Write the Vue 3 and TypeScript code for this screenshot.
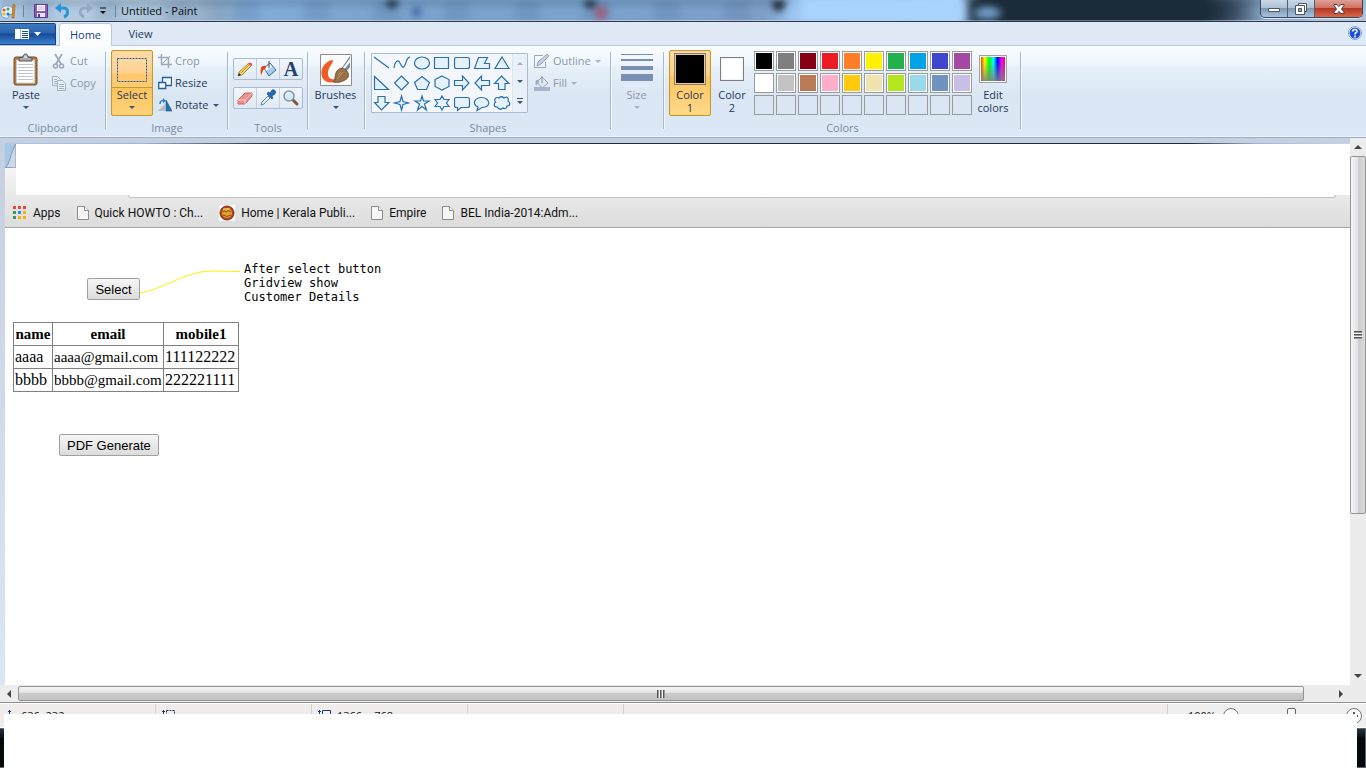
<script setup lang="ts">
import { ref } from 'vue'

interface Shape {
  name: string
  d: string
}

interface Bookmark {
  title: string
  icon: 'apps' | 'file' | 'emblem'
}

interface Customer {
  name: string
  email: string
  mobile: string
}

const shapes: Shape[] = [
  { name: 'Line', d: 'M2 4 17 15' },
  { name: 'Curve', d: 'M2 15C3 8 6 6 8 10S11 16 13 12 14 5 18 4' },
  { name: 'Oval', d: 'M2.5 10a7.5 6 0 1 0 15 0a7.500 6 0 1 0-15 0Z' },
  { name: 'Rectangle', d: 'M2.500 4.500h14v11h-14Z' },
  { name: 'Rounded rectangle', d: 'M4.500 4.500h11q2 0 2 2v7q0 2-2 2h-11q-2 0-2-2v-7q0-2 2-2Z' },
  { name: 'Polygon', d: 'M6.500 4.500h9l-3 6h5v5h-15Z' },
  { name: 'Triangle', d: 'M10 4 17 15.500H3Z' },
  { name: 'Right triangle', d: 'M2.500 3.500v13h14Z' },
  { name: 'Diamond', d: 'M9.500 3 16.500 10 9.500 17 2.500 10Z' },
  { name: 'Pentagon', d: 'M10 3.500 17.500 9.500 14.500 16.500h-9L2.500 9.500Z' },
  { name: 'Hexagon', d: 'M10 3 17 6.500v7L10 17 3 13.500v-7Z' },
  { name: 'Right arrow', d: 'M2.500 7.500h8v-4.500L17 10 10.500 17v-4.500h-8Z' },
  { name: 'Left arrow', d: 'M17.500 7.500h-8v-4.500L3 10 9.500 17v-4.500h8Z' },
  { name: 'Up arrow', d: 'M9.500 3 17 10.500h-4v6H6.500v-6h-4Z' },
  { name: 'Down arrow', d: 'M6 3.500h7v6h4L9.500 17 2.500 9.500H6Z' },
  { name: 'Four-point star', d: 'M9.500 3 11 8.500 16.500 10 11 11.500 9.500 17 8 11.500 2.500 10 8 8.500Z' },
  { name: 'Five-point star', d: 'M10 3 11.500 8H17l-4.500 3 2 6-4.500-3.500L5.500 17l2-6L3 8h5.500Z' },
  { name: 'Six-point star', d: 'M10 3 12 6.500h5L14.500 10 17 13.500h-5L10 17 8 13.500H3L5.500 10 3 6.500h5Z' },
  { name: 'Rounded callout', d: 'M4.500 4.500h11q2 0 2 2v6q0 2-2 2H9L5.500 17.500v-3h-1q-2 0-2-2v-6q0-2 2-2Z' },
  { name: 'Oval callout', d: 'M6 14C-1 11 3 4.500 10 4.500S21 14 10 14.500L5 17.500Z' },
  { name: 'Cloud callout', d: 'M5 14C1 14 2 10 3.500 9.500 1.500 6 4 3.500 7 5c2-2 4-1 5 0 3-2 5 0 4 3 3 2 2 5-1 5 0 3-3 3-4 2-2 2-4 1-5 0Z' },
]

const palette: string[] = [
  '#000000', '#7f7f7f', '#880015', '#ed1c24', '#ff7f27', '#fff200', '#22b14c', '#00a2e8', '#3f48cc', '#a349a4',
  '#ffffff', '#c3c3c3', '#b97a57', '#ffaec9', '#ffc90e', '#efe4b0', '#b5e61d', '#99d9ea', '#7092be', '#c8bfe7',
  '', '', '', '', '', '', '', '', '', '',
]

const bookmarks: Bookmark[] = [
  { title: 'Apps', icon: 'apps' },
  { title: 'Quick HOWTO : Ch...', icon: 'file' },
  { title: 'Home | Kerala Publi...', icon: 'emblem' },
  { title: 'Empire', icon: 'file' },
  { title: 'BEL India-2014:Adm...', icon: 'file' },
]

const appDots: string[] = ['#e8453c', '#e8453c', '#e8453c', '#2f9e58', '#2b8cf0', '#f5b400', '#2f9e58', '#f5b400', '#f5b400']

const customers: Customer[] = [
  { name: 'aaaa', email: 'aaaa@gmail.com', mobile: '111122222' },
  { name: 'bbbb', email: 'bbbb@gmail.com', mobile: '222221111' },
]

const color1 = ref('#000000')
const zoom = ref(50)

function pick(color: string) {
  if (color) color1.value = color
}
</script>

<template>
  <div class="window">
    <header class="titlebar">
      <div class="glass"></div>
      <svg class="app-icon" width="16" height="18" viewBox="0 0 16 18">
        <path d="M1 11C0 6 4 3 8 4c4 0 6 3 5 7-1 2-3 1-4 2 0 3-2 4-4 3-2 0-4-2-4-5Z" fill="#d9eef7" stroke="#6b9fbd" />
        <circle cx="4" cy="8" r="1.500" fill="#e8532c" /><circle cx="8" cy="7" r="1.500" fill="#3fa648" />
        <circle cx="4" cy="12" r="1.500" fill="#f1b51c" /><circle cx="8" cy="12" r="1.500" fill="#2f6fd0" />
        <path d="M13 2l2 1-1 13h-2Z" fill="#e58a2b" stroke="#a85a16" stroke-width=".6" />
      </svg>
      <span class="tick"></span>
      <div class="quick">
        <button type="button" aria-label="Save">
          <svg width="16" height="16" viewBox="0 0 16 16">
            <path d="M1.500 1.500h13v13h-13Z" fill="#8c5bb5" stroke="#5c3a8c" />
            <path d="M4 2h8v6H4Z" fill="#fff" /><path d="M5 4h6M5 6h6" stroke="#b9a6d3" />
            <path d="M4 10h8v4H4Z" fill="#e8e3f0" /><path d="M5 11h2v3H5Z" fill="#5c3a8c" />
          </svg>
        </button>
        <button type="button" aria-label="Undo">
          <svg width="16" height="16" viewBox="0 0 16 16">
            <path d="M3 5h5c6 0 6 7 1 9" fill="none" stroke="#2c93d8" stroke-width="3" />
            <path d="M6 0v10L0 5Z" fill="#2c93d8" />
          </svg>
        </button>
        <button type="button" aria-label="Redo">
          <svg width="16" height="16" viewBox="0 0 16 16">
            <path d="M13 5H8c-6 0-6 7-1 9" fill="none" stroke="#93aac2" stroke-width="3" />
            <path d="M10 0v10l6-5Z" fill="#93aac2" />
          </svg>
        </button>
        <button type="button" class="more" aria-label="Customize toolbar">
          <svg width="8" height="8" viewBox="0 0 8 8"><path d="M1 1h6" stroke="#111" /><path d="M1 4h6L4 7Z" fill="#111" /></svg>
        </button>
      </div>
      <span class="tick"></span>
      <h1>Untitled - Paint</h1>
      <div class="controls">
        <button type="button" aria-label="Minimize">
          <svg width="14" height="12" viewBox="0 0 14 12"><path d="M1.500 5.500h11v3h-11Z" fill="#fff" stroke="#4a5566" /></svg>
        </button>
        <button type="button" aria-label="Restore">
          <svg width="14" height="14" viewBox="0 0 14 14">
            <path d="M4.500 1.500h8v8h-8Z" fill="#fff" stroke="#4a5566" />
            <path d="M1.500 3.500h9v9h-9Z" fill="#fff" stroke="#4a5566" /><path d="M4.500 6.500h3v3h-3Z" fill="#8aa" stroke="#4a5566" />
          </svg>
        </button>
        <button type="button" class="close" aria-label="Close">
          <svg width="14" height="12" viewBox="0 0 14 12">
            <path d="M2 1.500h3l2 2 2-2h3v1L9.500 6l2.500 3v1.500H9L7 8.500l-2 2H2V9l2.500-3L2 2.500Z" fill="#fff" stroke="#4b3b45" />
          </svg>
        </button>
      </div>
    </header>

    <nav class="tabs">
      <button type="button" class="menu" aria-label="Paint menu">
        <svg width="28" height="12" viewBox="0 0 28 12">
          <path d="M1 1h14v10H1Z" fill="#fff" /><path d="M6.500 1v10" stroke="#a8bddb" />
          <path d="M8 3.500h6M8 5.500h6M8 7.500h6M8 9.500h6" stroke="#1a4b9c" /><path d="M20 4h7l-3.500 4Z" fill="#fff" />
        </svg>
      </button>
      <button type="button" class="tab active">Home</button>
      <button type="button" class="tab">View</button>
      <button type="button" class="help" aria-label="Help">
        <svg width="14" height="14" viewBox="0 0 14 14">
          <circle cx="7" cy="7" r="6.500" fill="#fff" stroke="#7ba3dc" /><circle cx="7" cy="7" r="5.500" fill="#1b50d8" />
          <path d="M4.500 5.500C5 2.500 9.500 3 9 5.500 8.500 7 7 6.500 7 8.500M7 9.500v2" fill="none" stroke="#fff" stroke-width="1.600" />
        </svg>
      </button>
    </nav>

    <section class="ribbon" aria-label="Ribbon">
      <div class="group clipboard">
        <div class="body">
          <button type="button" class="big">
            <svg class="pic" width="28" height="34" viewBox="0 0 28 34">
              <rect x="2" y="4" width="23" height="28" rx="2" fill="#b27a41" stroke="#7e5023" />
              <path d="M4.500 7h18v23h-18Z" fill="#fff" stroke="#c8ccd0" />
              <path d="M6 11.500h15M6 14.500h15M6 17.500h15M6 20.500h15M6 23.500h15M6 26.500h15" stroke="#b9c6d2" />
              <path d="M7 8V5l4-1c0-4 5-4 5 0l4 1v3Z" fill="#a9abae" stroke="#515457" /><path d="M12 4h3" stroke="#fff" />
            </svg>
            <span>Paste</span><i class="arrow"></i>
          </button>
          <div class="stack">
            <button type="button" class="small" disabled>
              <svg width="16" height="16" viewBox="0 0 16 16" fill="none" stroke="#9ba9bf" stroke-width="1.800">
                <path d="M4 1l6 10M11 1 5 11" /><circle cx="4.500" cy="13" r="2" stroke-width="1.500" /><circle cx="10.500" cy="13" r="2" stroke-width="1.500" />
              </svg>
              <span>Cut</span>
            </button>
            <button type="button" class="small" disabled>
              <svg width="16" height="16" viewBox="0 0 16 16" fill="#eaf0f8" stroke="#9fb0c8">
                <path d="M1.500 1.500h5l3 3v6h-8Z" /><path d="M3 4.500h3M3 6.500h3M3 8.500h3" />
                <path d="M6.500 5.500h5l3 3v7h-8Z" /><path d="M8 9.500h5M8 11.500h5M8 13.500h5" />
              </svg>
              <span>Copy</span>
            </button>
          </div>
        </div>
        <div class="label">Clipboard</div>
      </div>
      <div class="sep"></div>

      <div class="group image">
        <div class="body">
          <button type="button" class="big selected split">
            <svg class="pic" width="32" height="34" viewBox="0 0 32 34">
              <path d="M1.500 5.500h29v23h-29Z" fill="none" stroke="#255a96" stroke-dasharray="2 1" />
            </svg>
            <span>Select</span><i class="arrow"></i>
          </button>
          <div class="stack">
            <button type="button" class="small" disabled>
              <svg width="14" height="14" viewBox="0 0 14 14" fill="none" stroke="#9ba9bf">
                <path d="M0 3.500h10.500V14M3.500 0v10.500H14" stroke-width="1.500" /><path d="M4 10 12 2" />
              </svg>
              <span>Crop</span>
            </button>
            <button type="button" class="small">
              <svg width="14" height="14" viewBox="0 0 14 14" fill="#f4f9fd" stroke="#255f9e">
                <path d="M4.500 1.500h9v8h-9Z" stroke-width="1.300" /><path d="M.7 6.500h7v6h-7Z" stroke-width="1.300" />
              </svg>
              <span>Resize</span>
            </button>
            <button type="button" class="small">
              <svg width="14" height="14" viewBox="0 0 14 14">
                <path d="M0 13 7 6v7Z" fill="#b5bdc7" /><path d="M8 2v11h6Z" fill="#2272ac" stroke="#1a5687" stroke-width=".6" />
                <path d="M2 6c0-3 2-4 4-3" fill="none" stroke="#2b7bd3" stroke-width="1.500" /><path d="M5 0l3 3-3 2Z" fill="#2b7bd3" />
              </svg>
              <span>Rotate</span><i class="arrow"></i>
            </button>
          </div>
        </div>
        <div class="label">Image</div>
      </div>
      <div class="sep"></div>

      <div class="group tools">
        <div class="body">
          <div class="toolbox">
            <button type="button" aria-label="Pencil">
              <svg width="18" height="18" viewBox="0 0 18 18">
                <path d="M2 16l1-4L13 3l3 2L6 15Z" fill="#f6d463" stroke="#8d7439" stroke-width=".8" /><path d="M2 16l1-3 2 2Z" fill="#222" />
                <path d="M12 4l1-1c2-1 4 1 3 2l-1 1Z" fill="#e0564b" /><path d="M5 13 13 5" stroke="#c99524" />
              </svg>
            </button>
            <button type="button" aria-label="Fill with color">
              <svg width="18" height="18" viewBox="0 0 18 18">
                <path d="M5 8l6-5 6 7-7 6Z" fill="#a7cbe8" stroke="#3d6c9b" /><path d="M6 8l5-4 2 3-6 4Z" fill="#f6fbff" />
                <path d="M10 8V1" stroke="#444" /><path d="M7 6C2 5 1 8 2 15c2-3 1-5 5-7Z" fill="#e0451c" />
              </svg>
            </button>
            <button type="button" aria-label="Text"><b class="glyph-a">A</b></button>
          </div>
          <div class="toolbox">
            <button type="button" aria-label="Eraser">
              <svg width="18" height="18" viewBox="0 0 18 18">
                <path d="M2 11 9 4h7v3l-7 8H2Z" fill="#ee8e8b" stroke="#c76664" /><path d="M2 11h7l7-7M9 11v4" fill="none" stroke="#fbd2d0" />
              </svg>
            </button>
            <button type="button" aria-label="Color picker">
              <svg width="18" height="18" viewBox="0 0 18 18">
                <path d="M2 16l1-3 6-6 2 2-6 6Z" fill="#e4f2fb" stroke="#6b8298" />
                <path d="M8 5l5 5 1-1-1-2 3-2c2-3-1-5-3-4l-2 3-2-1Z" fill="#2268b2" stroke="#174c88" stroke-width=".6" />
              </svg>
            </button>
            <button type="button" aria-label="Magnifier">
              <svg width="18" height="18" viewBox="0 0 18 18">
                <path d="M11 11l4 4" stroke="#805732" stroke-width="3" stroke-linecap="round" /><circle cx="7" cy="7" r="5" fill="#d4ecfa" stroke="#8793a0" stroke-width="1.500" />
                <path d="M4 7c0-2 1-3 3-3" fill="none" stroke="#fff" />
              </svg>
            </button>
          </div>
        </div>
        <div class="label">Tools</div>
      </div>
      <div class="sep"></div>

      <div class="group brushes">
        <div class="body">
          <button type="button" class="big">
            <svg class="pic" width="32" height="34" viewBox="0 0 32 34">
              <path d="M.5 1.500h31v31H.500Z" fill="#fbfbfb" stroke="#8c8c8c" />
              <path d="M12 7C3 9-2 20 4 27c4 4 12 3 14-2-5 3-11 1-10-6 1-6 5-8 5-12Z" fill="#ee5c28" />
              <path d="M21 16 30 3v11l-5 6Z" fill="#74869a" /><path d="M22 16 31 4v4l-7 9Z" fill="#eff3f6" />
              <path d="M13 29c3-1 1-7 4-11 2-3 6-4 9-1 4 4 3 8-1 10-3 2-7 3-12 2Z" fill="#98704a" stroke="#6b482a" stroke-width=".8" /><path d="M17 26l6-7M18 22l3-3" stroke="#c69a66" />
            </svg>
            <span>Brushes</span><i class="arrow"></i>
          </button>
        </div>
      </div>
      <div class="sep"></div>

      <div class="group shapes">
        <div class="body">
          <div class="gallery">
            <div class="cells">
              <button v-for="s in shapes" :key="s.name" type="button" :aria-label="s.name">
                <svg width="20" height="20" viewBox="0 0 20 20"><path :d="s.d" :fill="s.name === 'Line' || s.name === 'Curve' ? 'none' : '#e6f2f9'" stroke="#2b6fad" stroke-width="1.200" /></svg>
              </button>
            </div>
            <div class="spin">
              <button type="button" aria-label="Previous row"><i class="arrow up"></i></button>
              <button type="button" aria-label="Next row"><i class="arrow"></i></button>
              <button type="button" class="expand" aria-label="More shapes"><i class="arrow"></i></button>
            </div>
          </div>
          <div class="stack">
            <button type="button" class="small" disabled>
              <svg width="16" height="16" viewBox="0 0 16 16" fill="none" stroke="#9ba9c0">
                <path d="M9 2.500H.500v12h11V9" /><path d="M3 13l1-4 9-8 2 2-8 8Z" fill="#c5cedd" />
              </svg>
              <span>Outline</span><i class="arrow"></i>
            </button>
            <button type="button" class="small" disabled>
              <svg width="16" height="16" viewBox="0 0 16 16">
                <path d="M0 12h16v4H0Z" fill="#a8b4ca" /><path d="M3 7l5-5 6 6-6 5Z" fill="#dfe6f0" stroke="#9ba9c0" />
                <path d="M8 8V1" stroke="#8795ae" /><path d="M5 5C1 4 1 8 2 11l3-4Z" fill="#a0adc3" />
              </svg>
              <span>Fill</span><i class="arrow"></i>
            </button>
          </div>
        </div>
        <div class="label">Shapes</div>
      </div>
      <div class="sep"></div>

      <div class="group size">
        <div class="body">
          <button type="button" class="big" disabled>
            <svg class="pic" width="32" height="34" viewBox="0 0 32 34"><path d="M0 1h32v1H0ZM0 6h32v2H0ZM0 13h32v4H0ZM0 21h32v7H0Z" fill="#7b8fb2" /></svg>
            <span>Size</span><i class="arrow"></i>
          </button>
        </div>
      </div>
      <div class="sep"></div>

      <div class="group colors">
        <div class="body">
          <button type="button" class="big selected">
            <span class="well"><span class="chip" :style="{ background: color1 }"></span></span>
            <span>Color<br />1</span>
          </button>
          <button type="button" class="big">
            <span class="well"><span class="chip light"></span></span>
            <span>Color<br />2</span>
          </button>
          <div class="palette">
            <button v-for="(c, i) in palette" :key="i" type="button" :class="{ empty: !c }" :style="{ backgroundColor: c || 'transparent' }" :aria-label="c ? 'Color ' + c : 'Empty color'" @click="pick(c)"></button>
          </div>
          <button type="button" class="big edit">
            <span class="well"><span class="spectrum"></span></span>
            <span>Edit<br />colors</span>
          </button>
        </div>
        <div class="label">Colors</div>
      </div>
      <div class="sep"></div>
    </section>

    <main class="workspace">
      <div class="canvas">
        <div class="shot">
          <div class="strip">
            <svg width="11" height="25" viewBox="0 0 11 25"><path d="M0 24.500C4 24 6 8 11 1v24Z" fill="#cdd9e8" stroke="#8299b4" /></svg>
          </div>
          <div class="navrow"><div class="omnibox"></div></div>
          <nav class="bookmarks" aria-label="Bookmarks">
            <a v-for="b in bookmarks" :key="b.title" href="#" :class="b.icon">
              <svg v-if="b.icon === 'apps'" width="14" height="14" viewBox="0 0 14 14">
                <rect v-for="(c, i) in appDots" :key="i" :x="(i % 3) * 5" :y="Math.floor(i / 3) * 5" width="3" height="3" :fill="c" />
              </svg>
              <svg v-else-if="b.icon === 'file'" width="12" height="14" viewBox="0 0 12 14">
                <path d="M.5.5h7l4 4v9H.500Z" fill="#f6f6f6" stroke="#8d8d8d" /><path d="M7.500.5v4h4" fill="#fff" stroke="#8d8d8d" />
              </svg>
              <svg v-else width="16" height="16" viewBox="0 0 16 16">
                <path d="M0 0h16v16H0Z" fill="#fff" /><circle cx="8" cy="8" r="7" fill="#b6471c" stroke="#812b14" /><circle cx="8" cy="8" r="5" fill="#dca230" />
                <path d="M4 7q2-2 3 0 3-3 5 0M4 10q4 3 8 0" fill="none" stroke="#984617" /><path d="M4 4h7" stroke="#f5d06a" />
              </svg>
              <span>{{ b.title }}</span>
            </a>
          </nav>
          <div class="cover"></div>
        </div>
        <div class="page">
          <div class="first">
            <button type="button" class="web">Select</button>
            <svg width="100" height="42" viewBox="0 0 100 42"><path d="M0 31C22 28 45 9 72 9L100 9.500" fill="none" stroke="#fff200" /></svg>
            <p>After select button<br />Gridview show<br />Customer Details</p>
          </div>
          <table>
            <colgroup><col class="c1" /><col class="c2" /><col class="c3" /></colgroup>
            <thead><tr><th scope="col">name</th><th scope="col">email</th><th scope="col">mobile1</th></tr></thead>
            <tbody>
              <tr v-for="c in customers" :key="c.name"><td>{{ c.name }}</td><td class="mail">{{ c.email }}</td><td>{{ c.mobile }}</td></tr>
            </tbody>
          </table>
          <button type="button" class="web generate">PDF Generate</button>
        </div>
      </div>
      <div class="vscroll">
        <button type="button" aria-label="Scroll up"><i class="tri up"></i></button>
        <div class="track"><div class="thumb"><i class="grip"></i></div></div>
        <button type="button" aria-label="Scroll down"><i class="tri down"></i></button>
      </div>
    </main>

    <div class="hscroll">
      <button type="button" aria-label="Scroll left"><i class="tri left"></i></button>
      <div class="track"><div class="thumb"><i class="grip"></i></div></div>
      <button type="button" aria-label="Scroll right"><i class="tri right"></i></button>
    </div>

    <footer class="status">
      <div class="cell">
        <svg width="10" height="12" viewBox="0 0 10 12"><path d="M3.500 0v12M0 5.500h8M2 1.500h3" stroke="#1f3f6e" /></svg>
        <span>636, 232px</span>
      </div>
      <div class="cell">
        <svg width="14" height="12" viewBox="0 0 14 12"><path d="M1.500 0v12M0 1.500h3" stroke="#1f3f6e" /><path d="M4.500.5h8v8h-8Z" fill="none" stroke="#1f3f6e" stroke-dasharray="2 1" /></svg>
      </div>
      <div class="cell">
        <svg width="14" height="12" viewBox="0 0 14 12"><path d="M1.500 0v12M0 1.500h3" stroke="#1f3f6e" /><path d="M4.500.5h8v8h-8Z" fill="#e8f3fa" stroke="#1f3f6e" /></svg>
        <span>1366 × 768px</span>
      </div>
      <div class="cell"></div>
      <div class="cell wide"></div>
      <div class="zoom">
        <span>100%</span>
        <button type="button" aria-label="Zoom out"><svg width="16" height="16" viewBox="0 0 16 16"><circle cx="8" cy="8" r="7.500" fill="#fafafa" stroke="#777" /><path d="M4 8h8" stroke="#555" stroke-width="2" /></svg></button>
        <input v-model="zoom" type="range" min="0" max="100" aria-label="Zoom" />
        <button type="button" aria-label="Zoom in"><svg width="16" height="16" viewBox="0 0 16 16"><circle cx="8" cy="8" r="7.500" fill="#fafafa" stroke="#777" /><path d="M4 8h8M8 4v8" stroke="#555" stroke-width="2" /></svg></button>
      </div>
    </footer>
    <div class="taskbar"></div>
    <div class="bottom-cover"></div>
  </div>
</template>

<style>
body {
  margin: 0;
}
</style>

<style scoped>
* {
  box-sizing: border-box;
}

.window {
  position: relative;
  display: flex;
  flex-direction: column;
  height: 100vh;
  overflow: hidden;
  background: #fff;
  font-family: "Open Sans", "Noto Sans", sans-serif;
  font-size: 11px;
  line-height: 14px;
  color: #1e395b;
}

button {
  margin: 0;
  padding: 0;
  border: 0;
  background: none;
  font: inherit;
  color: inherit;
}

svg {
  display: block;
  flex: none;
}

/* title bar */
.titlebar {
  position: relative;
  display: flex;
  align-items: center;
  flex: none;
  height: 22px;
  overflow: hidden;
  border-bottom: 1px solid #2c3950;
  box-shadow: inset 0 -1px #b9c9dc;
  background: linear-gradient(90deg, #a9c6e2 0, #b4cce2 7%, #a8bfd5 13%, #8aa5c2 16%, #82add8 18%, #7ba3cc 28%, #7aa2cd 43%, #7f9fc8 56%, #9ccaf6 59%, #a8d3fb 70%, #1c2b39 72%, #1c2b39 88%, #8fb0cf 93%, #bad0e5 100%);
}

.glass {
  position: absolute;
  inset: 0;
  filter: blur(3px);
  background:
    radial-gradient(ellipse 8px 8px at 28.700% 2px, #1c2b39 50%, transparent),
    radial-gradient(ellipse 8px 8px at 43.200% 2px, #1c2b39 50%, transparent),
    radial-gradient(ellipse 9px 9px at 44% 13px, #a05c78 40%, transparent),
    radial-gradient(ellipse 7px 7px at 30.500% 12px, #426ba8 40%, transparent),
    radial-gradient(ellipse 9px 12px at 57% 2px, #1c2b39 50%, transparent),
    radial-gradient(ellipse 17px 9px at 72.300% 13px, #6d97c0 50%, transparent),
    linear-gradient(90deg, transparent 70.500%, #1c2b39 71.500%, #1c2b39 88%, transparent 92%),
    linear-gradient(90deg, transparent 57%, #a8d3fb 59%, #a8d3fb 70.500%, transparent 71%),
    repeating-linear-gradient(90deg, transparent 0 20px, rgba(50, 85, 130, 0.15) 28px 46px, transparent 54px 70px),
    linear-gradient(rgba(40, 65, 90, 0.4), transparent 7px);
}

.titlebar > *:not(.glass) {
  position: relative;
}

.tick {
  width: 1px;
  height: 12px;
  margin: 0 9px 0 7px;
  background: #6f8496;
}

.quick {
  display: flex;
  align-items: center;
  gap: 6px;
}

.quick + .tick {
  margin: 0 5px 0 8px;
}

.more {
  width: 8px;
}

h1 {
  flex: 1;
  margin: 0;
  font-size: 11px;
  font-weight: 400;
  color: #0b0f14;
}

.controls {
  display: flex;
  align-self: flex-start;
  margin-right: 3px;
  height: 18px;
  border: 1px solid #37465a;
  border-top: 0;
  border-radius: 0 0 5px 5px;
  box-shadow: 0 1px #d7e5f2;
  background: linear-gradient(#cad9e8, #aec2d6 45%, #7e98b4 50%, #a9c3dc);
  overflow: hidden;
}

.controls button {
  display: grid;
  place-items: center;
  width: 27px;
  border-right: 1px solid #4f6075;
}

.controls .close {
  width: 47px;
  border: 0;
  background: linear-gradient(#dfa096, #cf7262 45%, #b63722 50%, #d8694a);
}

/* tabs */
.tabs {
  display: flex;
  flex: none;
  align-items: flex-end;
  height: 24px;
  border-bottom: 1px solid #b8cbdc;
  background: #dfe9f5;
}

.menu {
  display: grid;
  place-items: center;
  width: 56px;
  height: 22px;
  margin-right: 3px;
  border: 1px solid #15428b;
  border-left: 0;
  border-radius: 0 2px 0 0;
  background: linear-gradient(#3b79bd, #2a63ae 45%, #154a96 50%, #3a82d1);
}

.tab {
  width: 57px;
  height: 22px;
}

.tab.active {
  width: 53px;
  height: 23px;
  margin-bottom: -1px;
  border: 1px solid #b8cbdc;
  border-bottom: 0;
  border-radius: 3px 3px 0 0;
  background: #fbfdff;
  color: #15428b;
}

.help {
  margin: 0 4px 5px auto;
}

/* ribbon */
.ribbon {
  display: flex;
  flex: none;
  height: 92px;
  border-bottom: 1px solid #9cafc4;
  box-shadow: inset 0 -1px #eaf3fb;
  background: linear-gradient(#fafdff, #eef5fd 20%, #e6f0f9 24%, #dbe6f4 55%, #dce8f5);
}

.sep {
  width: 2px;
  height: 77px;
  margin-top: 6px;
  border-left: 1px solid #a7b8cf;
  border-right: 1px solid #f4f9fe;
}

.group {
  display: flex;
  flex-direction: column;
  padding-top: 4px;
}

.body {
  display: flex;
  height: 71px;
}

.label {
  text-align: center;
  color: #7a8ba6;
}

.clipboard { width: 105px; }
.image { width: 120px; }
.tools { width: 78px; }
.brushes { width: 55px; }
.shapes { width: 244px; }
.size { width: 51px; }
.colors { width: 355px; }

.big {
  display: flex;
  flex-direction: column;
  align-items: center;
  width: 42px;
  height: 66px;
  padding-top: 2px;
  border: 1px solid transparent;
  line-height: 13px;
}

.big .pic {
  margin-bottom: 1px;
}

.big .arrow {
  margin-top: 5px;
}

.clipboard .big {
  margin: 0 4px 0 5px;
}

.selected {
  border-color: #c29b29;
  border-radius: 2px;
  box-shadow: inset 0 0 1px #e0a93a;
  background: linear-gradient(#fbdba6, #fdd08a 38%, #ffc45c 40%, #ffd98a);
}

.split {
  background: linear-gradient(#fbdba6, #fdd293 22px, #ffc76a 23px, #ffcb73 36px, #c29b29 36px, #c29b29 37px, #ffc45c 37px, #ffd27a);
}

.brushes .big {
  width: 53px;
}

.size .big {
  width: 49px;
}

button:disabled {
  color: #8d97a6;
}

.stack {
  display: flex;
  flex-direction: column;
}

.small {
  display: flex;
  align-items: center;
  height: 22px;
  gap: 3px;
}

.small .arrow {
  margin-left: 1px;
}

.image .body {
  padding-left: 4px;
}

.image .stack {
  margin-left: 5px;
}

.arrow {
  width: 0;
  height: 0;
  border: 3px solid transparent;
  border-top-color: #3c5477;
  border-bottom: 0;
}

.arrow.up {
  border-top: 0;
  border-bottom: 3px solid #a6b3c6;
}

button:disabled .arrow {
  border-top-color: #a9b3c3;
}

.tools .body {
  flex-direction: column;
  gap: 7px;
  padding: 8px 4px 0;
}

.toolbox {
  display: flex;
  height: 22px;
  border: 1px solid #aabcd2;
  border-radius: 2px;
  background: linear-gradient(#f2f7fc, #dfe8f4);
}

.toolbox button {
  display: grid;
  place-items: center;
  flex: 1;
}

.toolbox button + button {
  border-left: 1px solid #c3d0e1;
}

.glyph-a {
  font: 700 20px/20px "Liberation Serif", serif;
  color: #223f6c;
}

.gallery {
  display: flex;
  width: 157px;
  height: 60px;
  margin: 3px 6px 0 5px;
  border: 1px solid #aabcd2;
  border-radius: 1px;
  background: #f3f7fc;
}

.cells {
  display: grid;
  grid-template-columns: repeat(7, 20px);
  grid-auto-rows: 20px;
  margin-top: -1px;
}

.spin {
  display: grid;
  flex: 1;
  border-left: 1px solid #dbe4ef;
  background: #e9f0f8;
}

.spin button {
  display: grid;
  place-content: center;
}

.expand {
  gap: 2px;
}

.expand::before {
  content: "";
  height: 1px;
  background: #3c5477;
}

.colors .body {
  padding-left: 4px;
}

.well {
  display: grid;
  place-items: center;
  flex: none;
  height: 32px;
  margin-bottom: 3px;
}

.chip {
  width: 32px;
  height: 32px;
  border: 1px solid #7f7f7f;
  box-shadow: inset 0 0 0 1px #f1c987;
}

.chip.light {
  width: 24px;
  height: 24px;
  background: #fff;
  box-shadow: inset 0 0 0 1px #edf3fa;
}

.palette {
  display: grid;
  grid-template-columns: repeat(10, 20px);
  grid-auto-rows: 20px;
  gap: 2px;
  margin: 1px 0 0 1px;
}

.palette button {
  border: 1px solid #9b9b9b;
  box-shadow: inset 0 0 0 1px #fff;
}

.palette .empty {
  box-shadow: none;
}

.spectrum {
  width: 28px;
  height: 28px;
  border: 1px solid #a0a0a0;
  box-shadow: inset 0 0 0 1px #fff;
  background: linear-gradient(transparent 20%, rgba(128, 128, 128, 0.9)), linear-gradient(90deg, #f00, #ff0 18%, #0f0 35%, #0ff 52%, #00f 68%, #f0f 84%, #f00);
}

/* drawing area */
.workspace {
  display: flex;
  flex: 1;
  min-height: 0;
}

.canvas {
  display: flex;
  flex: 1;
  flex-direction: column;
  padding: 5px 0 0 5px;
  background: linear-gradient(#c5cfe0, #dbe6f4);
}

.shot {
  position: relative;
  flex: none;
  background: linear-gradient(#f5f5f5 25px, #dcdcdc);
  border-bottom: 1px solid #a6a6a6;
}

.strip {
  height: 25px;
  border-bottom: 1px solid #8b9bb0;
  background: linear-gradient(90deg, #a7c8e9, #9cb9d8 10%, #1c2b39 20%, #1c2b39 88%, #9db6d4 93%, #c7d6e9);
}

.navrow {
  height: 30px;
}

.omnibox {
  height: 100%;
  margin: 0 14px 0 123px;
  border: 1px solid #c0c0c0;
  border-top: 0;
  border-radius: 0 0 3px 3px;
  background: #fff;
}

.cover {
  position: absolute;
  inset: 1px 0 32px 11px;
  background: #fff;
}

.bookmarks {
  display: flex;
  align-items: center;
  height: 29px;
  padding-left: 8px;
  gap: 16px;
  font-family: Roboto, "Open Sans", sans-serif;
  font-size: 12px;
}

.bookmarks a {
  display: flex;
  align-items: center;
  gap: 6px;
  color: #111;
  text-decoration: none;
  white-space: nowrap;
}

.page {
  flex: 1;
  padding-top: 34px;
  background: #fff;
  color: #000;
}

.first {
  display: flex;
  padding-left: 82px;
}

.first p {
  margin: 0 0 0 4px;
  font: 12px/14px "DejaVu Sans Mono", monospace;
}

.web {
  height: 22px;
  padding: 0 7px;
  border: 1px solid #a0a0a0;
  border-radius: 2px;
  background: linear-gradient(#f6f6f6, #dcdcdc);
  font: 13px "Liberation Sans", sans-serif;
  color: #000;
}

.first .web {
  width: 53px;
  margin-top: 16px;
}

.generate {
  display: block;
  margin: 42px 0 0 54px;
}

table {
  width: 226px;
  margin: 18px 0 0 8px;
  table-layout: fixed;
  border-collapse: collapse;
  font: 16px/20px "Liberation Serif", serif;
}

.c1 { width: 39px; }
.c2 { width: 111px; }
.c3 { width: 75px; }

th,
td {
  height: 23px;
  padding: 1px;
  border: 1px solid #808080;
  white-space: nowrap;
}

th,
.mail {
  font-size: 15px;
}

/* scroll bars */
.vscroll {
  display: flex;
  flex-direction: column;
  width: 16px;
  background: #ececec;
}

.vscroll button {
  display: grid;
  place-content: center;
  height: 18px;
}

.vscroll .track {
  flex: 1;
}

.vscroll .thumb {
  height: 70%;
  background: linear-gradient(90deg, #f5f5f5, #e4e4e6 45%, #cdcdd1 55%, #dadadc);
}

.thumb {
  display: grid;
  place-items: center;
  border: 1px solid #949494;
  border-radius: 2px;
}

.tri {
  border: 4px solid transparent;
}

.up.tri { border-top: 0; border-bottom-color: #444; }
.down.tri { border-bottom: 0; border-top-color: #444; }
.left.tri { border-left: 0; border-right-color: #444; }
.right.tri { border-right: 0; border-left-color: #444; }

.grip {
  width: 8px;
  height: 8px;
  background: repeating-linear-gradient(#555 0 1px, #999 1px 2px, #f6f6f6 2px 3px);
}

.hscroll {
  display: flex;
  flex: none;
  height: 18px;
  padding: 1px 16px 1px 0;
  border-bottom: 1px solid #8e8e8e;
  background: #ececec;
}

.hscroll button {
  display: grid;
  place-content: center;
  width: 18px;
}

.hscroll .track {
  flex: 1;
}

.hscroll .thumb {
  width: 97.900%;
  height: 15px;
  background: linear-gradient(#f5f5f5, #e2e2e3 45%, #cacacb 50%, #c2c2c4);
}

.hscroll .grip {
  background: repeating-linear-gradient(90deg, #555 0 1px, #999 1px 2px, #f6f6f6 2px 3px);
}

/* status bar */
.status {
  display: flex;
  flex: none;
  height: 25px;
  border-top: 1px solid #fff;
  border-bottom: 1px solid #fff;
  background: #f0ecec;
  color: #111;
}

.cell {
  display: flex;
  align-items: center;
  width: 156px;
  gap: 5px;
  padding-left: 6px;
  border-right: 1px solid #d5d0d0;
}

.cell.wide {
  flex: 1;
}

.zoom {
  display: flex;
  align-items: center;
  gap: 7px;
  width: 198px;
  padding: 0 4px 0 20px;
  background: #efefef;
}

.zoom input {
  flex: 1;
  min-width: 0;
  height: 20px;
  margin: 0 6px 0 4px;
  appearance: none;
  background: linear-gradient(#8a8a8a, #8a8a8a) 0 8px / 100% 1px no-repeat;
}

.zoom input::-webkit-slider-thumb {
  appearance: none;
  width: 9px;
  height: 16px;
  border: 1px solid #666;
  border-radius: 2px;
  background: #f7f7f7;
}

.taskbar {
  flex: none;
  height: 40px;
  border: 1px solid #5a6872;
  border-left: 0;
  background: linear-gradient(#26323a, #06090b 10px);
}

.bottom-cover {
  position: absolute;
  inset: auto 9px 0 4px;
  height: 54px;
  background: #fff;
}
</style>
